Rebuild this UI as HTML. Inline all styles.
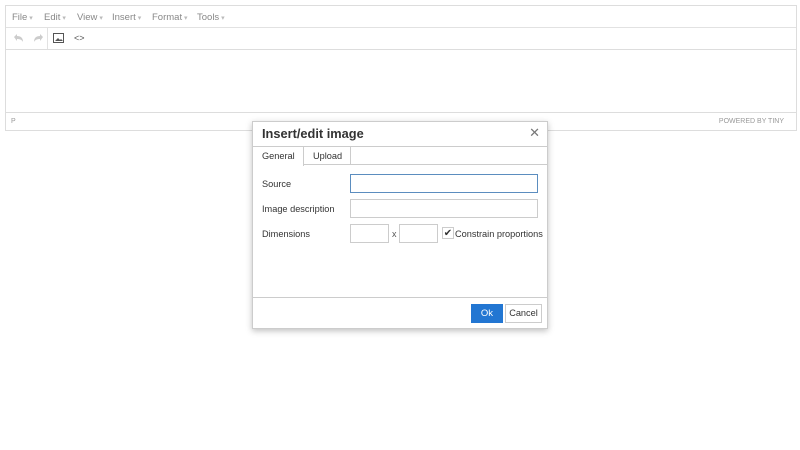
<!DOCTYPE html>
<html><head><style>
*{box-sizing:border-box;margin:0;padding:0}
body{width:800px;height:450px;background:#fff;font-family:"Liberation Sans",sans-serif;color:#333;position:relative;overflow:hidden}
.ed{position:absolute;left:5px;top:5px;width:792px;height:126px;border:1px solid #ddd}
.menu{height:22px;border-bottom:1px solid #e2e2e2;font-size:9.5px;color:#888;position:relative}
.menu span{position:absolute;top:6px}
.menu span:after{content:" ▾";font-size:7px;color:#bbb}
.tb{height:22px;border-bottom:1px solid #ddd;position:relative}
.st{position:absolute;top:106px;left:0;right:0;height:19px;border-top:1px solid #ddd;font-size:7px;color:#999}
.dlg{position:absolute;left:252px;top:121px;width:296px;height:208px;background:#fff;border:1px solid #ccc;box-shadow:0 2px 6px rgba(0,0,0,.25)}
.ttl{position:absolute;left:9px;top:4px;font-size:12.8px;font-weight:bold;color:#333}
.x{position:absolute;right:7px;top:3px;font-size:13px;color:#777}
.tabs{position:absolute;top:24px;left:0;right:0;height:19px;border-top:1px solid #ccc;border-bottom:1px solid #ccc;font-size:9.2px}
.tab{position:absolute;top:0;height:18px;padding-top:4px;border-right:1px solid #ccc}
.lbl{position:absolute;left:9px;font-size:9.2px;color:#333}
.in{position:absolute;height:19px;border:1px solid #ccc;background:#fff}
.foot{position:absolute;left:0;right:0;top:175px;height:32px;border-top:1px solid #ccc}
</style></head><body>
<div class="ed">
<div class="menu"><span style="left:6px">File</span><span style="left:38px">Edit</span><span style="left:71px">View</span><span style="left:106px">Insert</span><span style="left:146px">Format</span><span style="left:191px">Tools</span></div>
<div class="tb">
<svg style="position:absolute;left:6px;top:5px" width="14" height="12"><path d="M2 4l3-3v2c4 0 6 2 6 6-1-2-3-3-6-3v2z" fill="#ccc"/></svg>
<svg style="position:absolute;left:25px;top:5px" width="14" height="12"><path d="M12 4l-3-3v2c-4 0-6 2-6 6 1-2 3-3 6-3v2z" fill="#ccc"/></svg>
<div style="position:absolute;left:41px;top:0;width:1px;height:21px;background:#e2e2e2"></div>
<svg style="position:absolute;left:47px;top:5px" width="12" height="11"><rect x=".5" y=".5" width="10" height="9" fill="none" stroke="#555"/><path d="M2 8l3-3 2 2 1-1 2 2z" fill="#555"/></svg>
<div style="position:absolute;left:68px;top:5px;font-size:9px;color:#555">&lt;&gt;</div>
</div>
<div class="st"><span style="position:absolute;left:5px;top:5px">P</span><span style="position:absolute;right:12px;top:5px">POWERED BY TINY</span></div>
</div>
<div class="dlg">
<div class="ttl">Insert/edit image</div><div class="x">✕</div>
<div class="tabs"><div class="tab" style="left:0;width:51px;padding-left:9px;height:19px;background:#fff">General</div><div class="tab" style="left:51px;width:47px;padding-left:9px">Upload</div></div>
<div class="lbl" style="top:57px">Source</div>
<div class="in" style="left:97px;top:52px;width:188px;border-color:#5b8dbf"></div>
<div class="lbl" style="top:82px">Image description</div>
<div class="in" style="left:97px;top:77px;width:188px"></div>
<div class="lbl" style="top:107px">Dimensions</div>
<div class="in" style="left:97px;top:102px;width:39px"></div>
<div style="position:absolute;left:139px;top:107px;font-size:9px;color:#555">x</div>
<div class="in" style="left:146px;top:102px;width:39px"></div>
<div style="position:absolute;left:189px;top:105px;width:12px;height:12px;border:1px solid #ccc;font-size:10px;line-height:11px;text-align:center">✔</div>
<div style="position:absolute;left:202px;top:107px;font-size:9.2px;white-space:nowrap">Constrain proportions</div>
<div class="foot">
<div style="position:absolute;left:218px;top:6px;width:32px;height:19px;background:#2276d2;color:#fff;font-size:9.5px;text-align:center;line-height:19px">Ok</div>
<div style="position:absolute;left:252px;top:6px;width:37px;height:19px;border:1px solid #ccc;font-size:9.2px;text-align:center;line-height:17px">Cancel</div>
</div>
</div>
</body></html>
